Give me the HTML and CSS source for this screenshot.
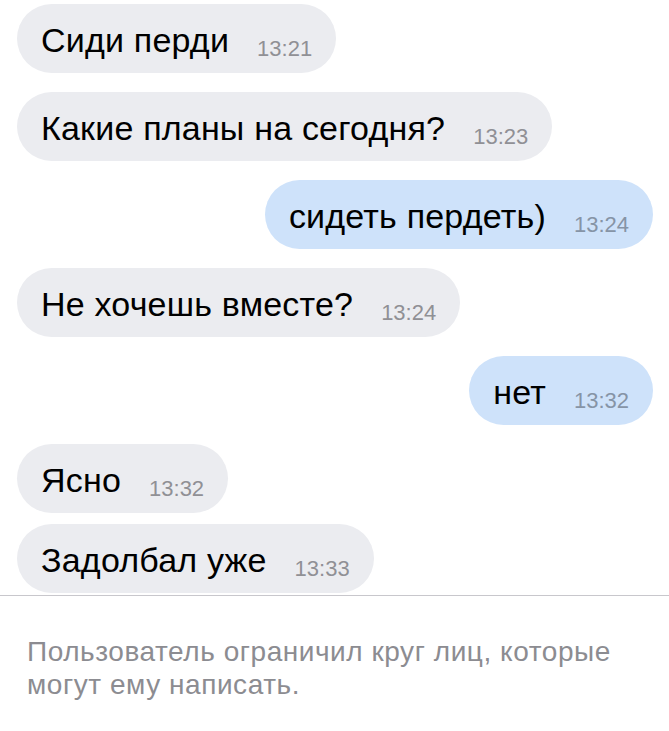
FILE: index.html
```html
<!DOCTYPE html>
<html lang="ru">
<head>
    <meta charset="UTF-8">
    <meta name="viewport" content="width=device-width, initial-scale=1.0">
    <title>Сообщения</title>
    <link rel="stylesheet" href="styles.css">
</head>
<body>
    <div class="chat">
        <div class="msg in"><span class="text">Сиди перди</span><span class="time">13:21</span></div>
        <div class="msg in"><span class="text">Какие планы на сегодня?</span><span class="time">13:23</span></div>
        <div class="msg out"><span class="text">сидеть пердеть)</span><span class="time">13:24</span></div>
        <div class="msg in"><span class="text">Не хочешь вместе?</span><span class="time">13:24</span></div>
        <div class="msg out"><span class="text">нет</span><span class="time">13:32</span></div>
        <div class="msg in"><span class="text">Ясно</span><span class="time">13:32</span></div>
        <div class="msg in same"><span class="text">Задолбал уже</span><span class="time">13:33</span></div>
    </div>

    <!-- запрет на сообщения -->
    <p class="notice">Пользователь ограничил круг лиц, которые могут ему написать.</p>
</body>
</html>
```

FILE: styles.css
```css
body {
    margin: 0;
    font-family: "Liberation Sans", Arial, sans-serif;
    background-color: #fff;
    color: #000;
}
.chat {
    display: flex;
    flex-direction: column;
    align-items: flex-start;
    padding: 4px 16px 2px 17px;
    border-bottom: 1px solid #c8c7cc;
}
.msg {
    display: block;
    white-space: nowrap;
    margin-top: 19px;
    padding: 16px 24px 13px 24px;
    border-radius: 35px;
    background-color: #ebecf0;
    font-size: 34px;
    letter-spacing: 0.2px;
    line-height: 40px;
}
.msg:first-child { margin-top: 0; }
.msg.same { margin-top: 11px; }
.msg.out {
    align-self: flex-end;
    background-color: #cee2fa;
}
.time {
    margin-left: 28px;
    font-size: 22px;
    letter-spacing: 0;
    line-height: 0;
    vertical-align: -4px;
    color: #909095;
}
.out .time { color: #8694a6; }
.notice {
    margin: 0;
    padding: 39px 30px 0 27px;
    font-size: 28px;
    letter-spacing: 0.55px;
    line-height: 33px;
    color: #8c8c91;
}
```
